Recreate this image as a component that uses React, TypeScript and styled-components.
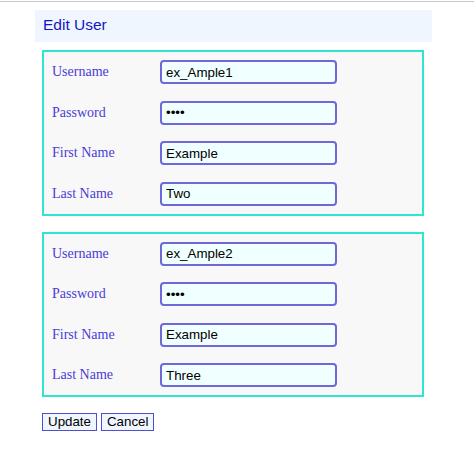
import React from "react";
import styled, { createGlobalStyle } from "styled-components";

type User = {
  username: string;
  password: string;
  firstName: string;
  lastName: string;
};

const users: User[] = [
  { username: "ex_Ample1", password: "pass", firstName: "Example", lastName: "Two" },
  { username: "ex_Ample2", password: "pass", firstName: "Example", lastName: "Three" },
];

export default function App() {
  return (
    <>
      <GlobalStyle />
      <TopRule />
      <Page>
        <Header>Edit User</Header>
        <Forms>
          {users.map((user) => (
            <UserBox key={user.username}>
              <Label>Username</Label>
              <Input type="text" defaultValue={user.username} />
              <Label>Password</Label>
              <Input type="password" defaultValue={user.password} />
              <Label>First Name</Label>
              <Input type="text" defaultValue={user.firstName} />
              <Label>Last Name</Label>
              <Input type="text" defaultValue={user.lastName} />
            </UserBox>
          ))}
          <Actions>
            <Button type="button">Update</Button>
            <Button type="button">Cancel</Button>
          </Actions>
        </Forms>
      </Page>
    </>
  );
}

const GlobalStyle = createGlobalStyle`
  body {
    margin: 0;
    background: #ffffff;
    font-family: "Liberation Serif", "Times New Roman", serif;
  }
`;

const TopRule = styled.div`
  margin-top: 1px;
  height: 1px;
  background: #c8c8c8;
`;

const Page = styled.div`
  width: 397px;
  margin: 8px 0 0 35px;
`;

const Header = styled.h2`
  margin: 0;
  height: 32px;
  padding: 0 0 2px 8px;
  box-sizing: border-box;
  display: flex;
  align-items: center;
  background: #f0f6ff;
  color: #1414c8;
  font-family: "Liberation Sans", Arial, sans-serif;
  font-size: 15.5px;
  font-weight: normal;
`;

const Forms = styled.div`
  display: flex;
  flex-direction: column;
  gap: 16px;
  margin: 8px 8px 0 7px;
`;

const UserBox = styled.div`
  display: grid;
  grid-template-columns: 108px 177px;
  grid-auto-rows: 24px;
  row-gap: 16.5px;
  align-items: center;
  padding: 8px;
  border: 2px solid #30e4d4;
  background: #f8f8f8;
`;

const Label = styled.label`
  color: #4a3cd6;
  font-size: 14px;
`;

const Input = styled.input`
  box-sizing: border-box;
  width: 177px;
  height: 24px;
  padding: 0 4px;
  border: 2px solid #7068d8;
  border-radius: 4px;
  background: #f0ffff;
  color: #000000;
  font-family: "Liberation Sans", Arial, sans-serif;
  font-size: 13.333px;
  outline: none;
`;

const Actions = styled.div`
  display: flex;
  gap: 4px;
`;

const Button = styled.button`
  height: 18px;
  padding: 0 5px;
  border: 1px solid #5050cc;
  border-radius: 0;
  background: #f0f6ff;
  color: #000000;
  font-family: "Liberation Sans", Arial, sans-serif;
  font-size: 13.333px;
  line-height: 16px;
`;
